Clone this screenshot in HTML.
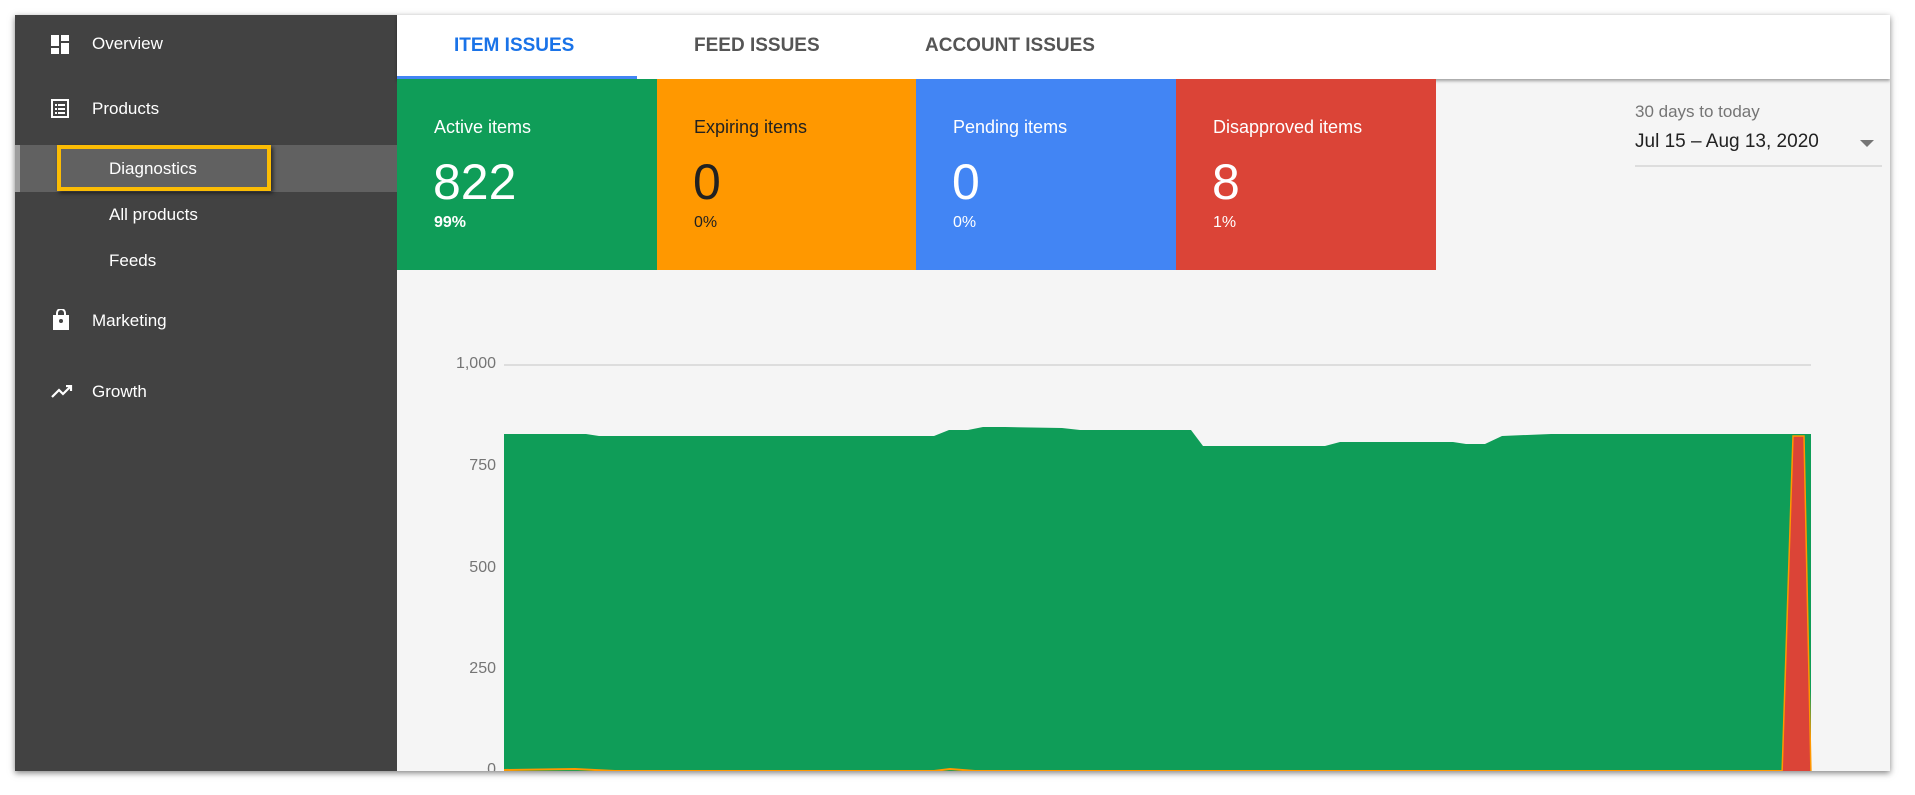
<!DOCTYPE html>
<html><head><meta charset="utf-8"><style>
*{margin:0;padding:0;box-sizing:border-box}
body{width:1915px;height:795px;background:#fff;font-family:"Liberation Sans",Arial,sans-serif;position:relative;overflow:hidden}
#frame{position:absolute;left:15px;top:15px;width:1875px;height:756px;background:#f5f5f5;box-shadow:0 2px 6px rgba(0,0,0,.5);overflow:hidden}
#side{position:absolute;left:0;top:0;width:382px;height:756px;background:#424242;color:#fff;font-size:17px}
.it{position:absolute;left:77px}
.sub{position:absolute;left:94px}
.ic{position:absolute;left:36px}
#sel{position:absolute;left:0;top:130px;width:382px;height:47px;background:#616161;border-left:5px solid #9e9e9e}
#box{position:absolute;left:42px;top:130px;width:214px;height:46px;border:4px solid #fbbc04;box-shadow:2px 2px 4px rgba(0,0,0,.6)}
#tabs{position:absolute;left:382px;top:0;right:0;height:64px;background:#fff;box-shadow:0 2px 3px rgba(0,0,0,.35);font-size:19px;font-weight:bold;color:#555}
#tabs span{position:absolute;top:20px}
.card{position:absolute;top:64px;width:260px;height:191px;color:#fff}
.card .t{position:absolute;left:37px;top:38px;font-size:18px}
.card .n{position:absolute;left:36px;top:74px;font-size:50px}
.card .p{position:absolute;left:37px;top:135px;font-size:16px;font-weight:bold}
.lab{position:absolute;width:60px;text-align:right;left:421px;font-size:16px;color:#757575}
</style></head><body>
<div id="frame">
<div id="side">
 <svg class="ic" style="top:20px" width="20" height="20" viewBox="0 0 20 20" fill="#fff"><rect x="0" y="0" width="8" height="11"/><rect x="10" y="0" width="8" height="6"/><rect x="10" y="8" width="8" height="11"/><rect x="0" y="13" width="8" height="6"/></svg>
 <div class="it" style="top:19px">Overview</div>
 <svg class="ic" style="top:84px" width="20" height="20" viewBox="0 0 20 20"><rect x="1" y="1" width="16" height="17" fill="none" stroke="#fff" stroke-width="2"/><g fill="#fff"><rect x="4" y="5" width="2" height="2"/><rect x="7" y="5" width="7" height="2"/><rect x="4" y="9" width="2" height="2"/><rect x="7" y="9" width="7" height="2"/><rect x="4" y="13" width="2" height="2"/><rect x="7" y="13" width="7" height="2"/></g></svg>
 <div class="it" style="top:84px">Products</div>
 <div id="sel"></div>
 <div id="box"></div>
 <div class="sub" style="top:144px">Diagnostics</div>
 <div class="sub" style="top:190px">All products</div>
 <div class="sub" style="top:236px">Feeds</div>
 <svg class="ic" style="top:294px" width="20" height="22" viewBox="0 0 20 22" fill="#fff"><path d="M2 6h16v15H2z"/><path d="M6 7V4a4 4 0 0 1 8 0v3" fill="none" stroke="#fff" stroke-width="2"/><circle cx="10" cy="12" r="2" fill="#424242"/></svg>
 <div class="it" style="top:296px">Marketing</div>
 <svg class="ic" style="top:370px" width="22" height="14" viewBox="0 0 22 14"><path d="M1 12l7-7 4 4 8-8M15 1h5v5" fill="none" stroke="#fff" stroke-width="2.2"/></svg>
 <div class="it" style="top:367px">Growth</div>
</div>
<div id="tabs">
 <span style="left:57px;color:#1a73e8">ITEM ISSUES</span>
 <span style="left:297px">FEED ISSUES</span>
 <span style="left:528px">ACCOUNT ISSUES</span>
 <div style="position:absolute;left:0;top:61px;width:240px;height:4px;background:#4285f4"></div>
</div>
<div class="card" style="left:382px;background:#0f9d58"><div class="t">Active items</div><div class="n">822</div><div class="p">99%</div></div>
<div class="card" style="left:642px;background:#ff9800;color:#212121"><div class="t">Expiring items</div><div class="n">0</div><div class="p" style="font-weight:normal">0%</div></div>
<div class="card" style="left:901px;background:#4285f4"><div class="t">Pending items</div><div class="n">0</div><div class="p" style="font-weight:normal">0%</div></div>
<div class="card" style="left:1161px;background:#db4437"><div class="t">Disapproved items</div><div class="n">8</div><div class="p" style="font-weight:normal">1%</div></div>
<div style="position:absolute;left:1620px;top:87px;font-size:17px;color:#757575">30 days to today</div>
<div style="position:absolute;left:1620px;top:116px;font-size:19px;color:#212121">Jul 15 – Aug 13, 2020</div>
<div style="position:absolute;left:1845px;top:125px;border-left:7px solid transparent;border-right:7px solid transparent;border-top:7px solid #757575"></div>
<div style="position:absolute;left:1620px;top:150px;width:247px;height:2px;background:#ddd"></div>
<div class="lab" style="top:340px">1,000</div>
<div class="lab" style="top:442px">750</div>
<div class="lab" style="top:544px">500</div>
<div class="lab" style="top:645px">250</div>
<div class="lab" style="top:746px">0</div>
<svg style="position:absolute;left:0;top:0" width="1875" height="756">
 <line x1="489" y1="350" x2="1796" y2="350" stroke="#ddd" stroke-width="2"/>
 <polygon fill="#0f9d58" points="489,419 571,419 584,421 919,421 934,415 953,415 968,412 990,412 1047,413 1065,415 1176,415 1188,431 1310,431 1325,427 1438,427 1451,429 1470,429 1487,421 1536,419 1796,419 1796,760 489,760"/>
 <polyline fill="none" stroke="#ff9800" stroke-width="2" points="489,755 560,754 600,756 919,756 935,754 960,756 1796,756"/>
 <polygon fill="#db4437" points="1767,760 1778,421 1789,421 1796,760"/>
 <polyline fill="none" stroke="#ff9800" stroke-width="1.5" points="1767,760 1778,421 1789,421 1796,760"/>
</svg>
</div>
</body></html>
